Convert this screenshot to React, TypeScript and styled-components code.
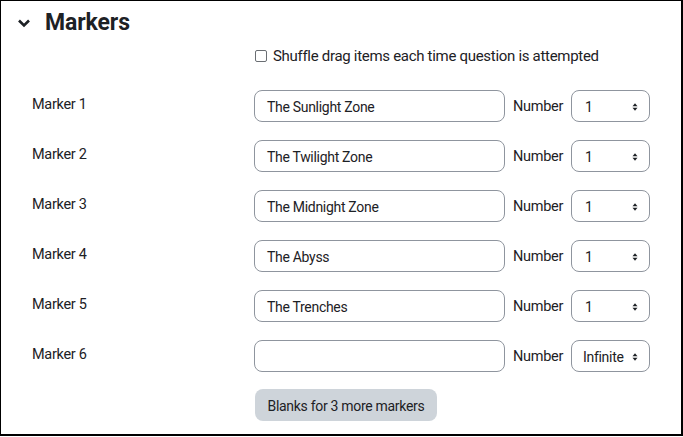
import React from "react";
import styled, { createGlobalStyle } from "styled-components";

const GlobalStyle = createGlobalStyle`
  html, body {
    margin: 0;
    padding: 0;
    background: #fff;
  }
  body {
    font-family: Roboto, "Liberation Sans", sans-serif;
    color: #1d2125;
  }
`;

const Frame = styled.div`
  box-sizing: border-box;
  width: 683px;
  height: 436px;
  border-style: solid;
  border-color: #000;
  border-width: 1px 2px 2px 1px;
  background: #fff;
  overflow: hidden;
`;

const Header = styled.div`
  display: flex;
  align-items: center;
  height: 42px;
  padding-left: 16px;
  gap: 14px;
`;

const Chevron = styled.svg`
  width: 14px;
  height: 10px;
  margin-top: 2px;
`;

const Title = styled.h3`
  margin: 0;
  font-size: 23px;
  font-weight: 700;
  color: #1d2125;
  line-height: 1;
  letter-spacing: -0.1px;
`;

const CheckRow = styled.label`
  display: flex;
  align-items: center;
  gap: 6px;
  margin-left: 254px;
  height: 26px;
  font-size: 15px;
  letter-spacing: -0.3px;
  color: #1d2125;
`;

const Box = styled.span`
  box-sizing: border-box;
  width: 12px;
  height: 12px;
  border: 1px solid #6a6e73;
  border-radius: 2px;
  background: #fff;
`;

const List = styled.div`
  display: flex;
  flex-direction: column;
  gap: 18px;
  margin-top: 21px;
`;

const Row = styled.div`
  display: grid;
  grid-template-columns: 222px 251px 66px 79px;
  align-items: center;
  padding-left: 31px;
  height: 32px;
`;

const Label = styled.div`
  font-size: 14.5px;
  letter-spacing: -0.3px;
  color: #1d2125;
  align-self: start;
  padding-top: 6px;
`;

const TextInput = styled.div`
  box-sizing: border-box;
  width: 251px;
  height: 32px;
  border: 1px solid #8f959e;
  border-radius: 8px;
  padding: 1px 12px 0;
  display: flex;
  align-items: center;
  font-size: 14px;
  letter-spacing: -0.3px;
  color: #1d2125;
`;

const NumberLabel = styled.div`
  font-size: 14.5px;
  letter-spacing: -0.3px;
  color: #1d2125;
  padding-left: 8px;
`;

const Select = styled.div<{ $wide?: boolean }>`
  box-sizing: border-box;
  width: 79px;
  height: 32px;
  border: 1px solid #8f959e;
  border-radius: 8px;
  display: flex;
  align-items: center;
  justify-content: space-between;
  padding: 1px 11px 0 ${(p) => (p.$wide ? "11px" : "13px")};
  font-size: 14px;
  letter-spacing: -0.3px;
  color: #1d2125;
`;

const Arrows = styled.svg`
  width: 6px;
  height: 10px;
  flex: none;
`;

const ButtonRow = styled.div`
  padding-left: 254px;
  margin-top: 17px;
`;

const Button = styled.button`
  box-sizing: border-box;
  height: 32px;
  width: 182px;
  padding: 1px 0 0;
  border: none;
  border-radius: 8px;
  background: #ced4da;
  color: #1d2125;
  font-family: Roboto, "Liberation Sans", sans-serif;
  font-size: 14px;
  letter-spacing: -0.3px;
`;

const markers = [
  { name: "Marker 1", value: "The Sunlight Zone", num: "1" },
  { name: "Marker 2", value: "The Twilight Zone", num: "1" },
  { name: "Marker 3", value: "The Midnight Zone", num: "1" },
  { name: "Marker 4", value: "The Abyss", num: "1" },
  { name: "Marker 5", value: "The Trenches", num: "1" },
  { name: "Marker 6", value: "", num: "Infinite" },
];

const SelectArrows = () => (
  <Arrows viewBox="0 0 6 10">
    <path d="M0.5 4.2 L3 1.2 L5.5 4.2 Z" fill="#1d2125" />
    <path d="M0.5 5.8 L3 8.8 L5.5 5.8 Z" fill="#1d2125" />
  </Arrows>
);

const App: React.FC = () => {
  return (
    <>
      <GlobalStyle />
      <Frame>
        <Header>
          <Chevron viewBox="0 0 14 10">
            <path d="M2 2.5 L7 7.5 L12 2.5" fill="none" stroke="#1d2125" strokeWidth="2.6" />
          </Chevron>
          <Title>Markers</Title>
        </Header>
        <CheckRow>
          <Box />
          Shuffle drag items each time question is attempted
        </CheckRow>
        <List>
          {markers.map((m) => (
            <Row key={m.name}>
              <Label>{m.name}</Label>
              <TextInput>{m.value}</TextInput>
              <NumberLabel>Number</NumberLabel>
              <Select $wide={m.num !== "1"}>
                <span>{m.num}</span>
                <SelectArrows />
              </Select>
            </Row>
          ))}
        </List>
        <ButtonRow>
          <Button>Blanks for 3 more markers</Button>
        </ButtonRow>
      </Frame>
    </>
  );
};

export default App;
